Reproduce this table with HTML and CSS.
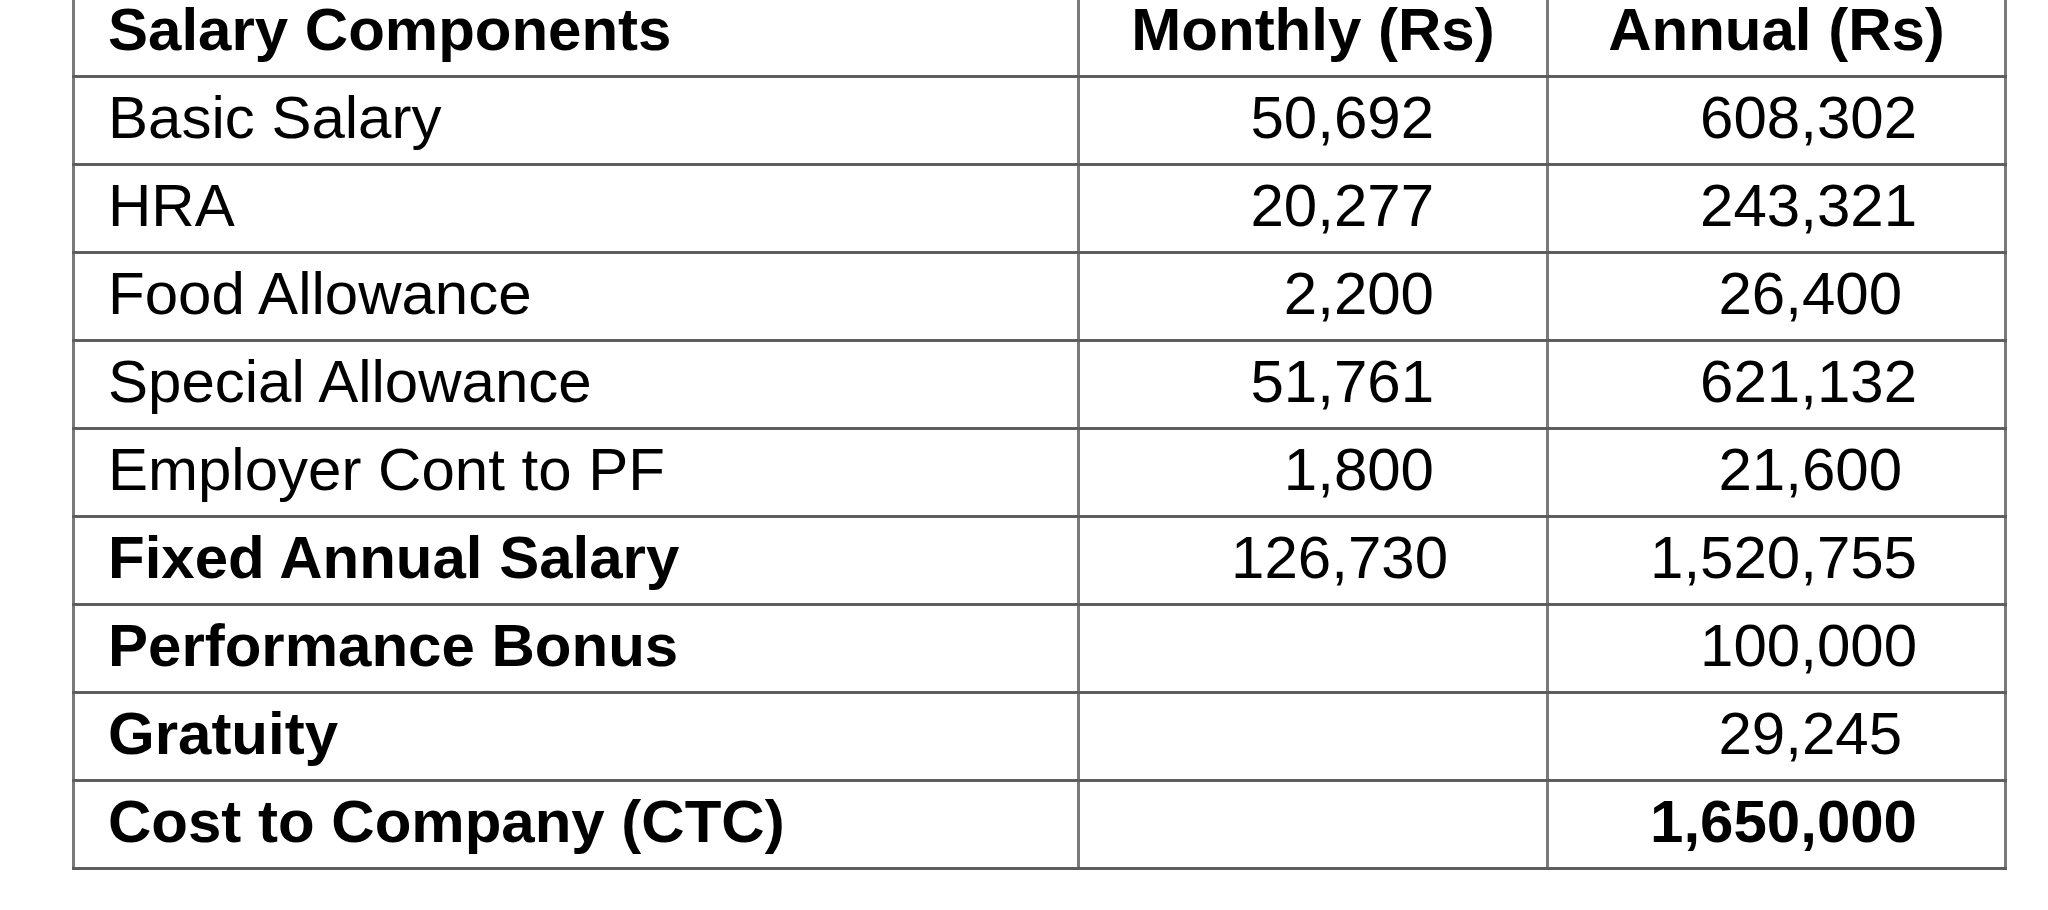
FILE: index.html
```html
<!DOCTYPE html>
<html lang="en">
<head>
<meta charset="utf-8">
<title>Salary Components</title>
<link rel="stylesheet" href="styles.css">
</head>
<body>
<div class="page">
  <table class="salary">
    <colgroup>
      <col class="c-label">
      <col class="c-month">
      <col class="c-year">
    </colgroup>
    <thead>
      <tr>
        <th class="label">Salary Components</th>
        <th class="head">Monthly (Rs)</th>
        <th class="head">Annual (Rs)</th>
      </tr>
    </thead>
    <tbody>
      <tr>
        <td class="label">Basic Salary</td>
        <td class="num m">50,692</td>
        <td class="num y">608,302</td>
      </tr>
      <tr>
        <td class="label">HRA</td>
        <td class="num m">20,277</td>
        <td class="num y">243,321</td>
      </tr>
      <tr>
        <td class="label">Food Allowance</td>
        <td class="num m">2,200</td>
        <td class="num y short">26,400</td>
      </tr>
      <tr>
        <td class="label">Special Allowance</td>
        <td class="num m">51,761</td>
        <td class="num y">621,132</td>
      </tr>
      <tr>
        <td class="label">Employer Cont to PF</td>
        <td class="num m">1,800</td>
        <td class="num y short">21,600</td>
      </tr>
      <tr>
        <td class="label bold">Fixed Annual Salary</td>
        <td class="num m long">126,730</td>
        <td class="num y">1,520,755</td>
      </tr>
      <tr>
        <td class="label bold">Performance Bonus</td>
        <td class="num m"></td>
        <td class="num y">100,000</td>
      </tr>
      <tr>
        <td class="label bold">Gratuity</td>
        <td class="num m"></td>
        <td class="num y short">29,245</td>
      </tr>
      <tr>
        <td class="label bold">Cost to Company (CTC)</td>
        <td class="num m"></td>
        <td class="num y bold">1,650,000</td>
      </tr>
    </tbody>
  </table>
</div>
</body>
</html>
```

FILE: styles.css
```css
html, body {
  margin: 0;
  padding: 0;
  background: #ffffff;
}

body {
  font-family: "Liberation Sans", Arial, sans-serif;
  color: #000000;
  overflow: hidden;
}

.page {
  padding-left: 72px;
}

.salary {
  border-collapse: collapse;
  width: 1932px;
  margin-top: -13px;
  table-layout: fixed;
  font-size: 60px;
  line-height: 69px;
}

.c-label { width: 1005px; }
.c-month { width: 469px; }
.c-year  { width: 458px; }

.salary tr {
  height: 88px;
}

.salary th,
.salary td {
  border-style: solid;
  border-width: 3px;
  border-color: #5e5e5e #7a7a7a;
  padding: 0 0 6px 0;
  vertical-align: middle;
  white-space: nowrap;
}

.salary th {
  font-weight: bold;
}

.salary .head {
  text-align: center;
}

.salary .label {
  text-align: left;
  padding-left: 33px;
}

.salary .bold {
  font-weight: bold;
}

.salary .num {
  text-align: right;
}

.salary .num.m {
  padding-right: 112px;
}

.salary .num.m.long {
  padding-right: 98px;
}

.salary .num.y {
  padding-right: 87px;
}

.salary .num.y.short {
  padding-right: 102px;
}
```
